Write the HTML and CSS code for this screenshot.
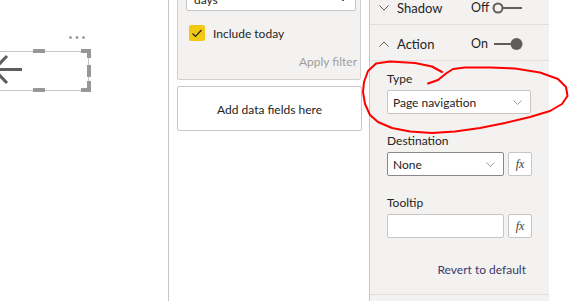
FILE: index.html
```html
<!DOCTYPE html>
<html lang="en">

<head>
  <meta charset="UTF-8">
  <title>Button action</title>
  <link rel="stylesheet" href="styles.css">
</head>

<body>
  <div class="app">
    <div class="canvas">
      <svg class="canvas-art" width="168" height="301" viewBox="0 0 168 301">
        <circle cx="70.5" cy="37.5" r="1.3" fill="#8a8886" />
        <circle cx="77" cy="37.5" r="1.3" fill="#8a8886" />
        <circle cx="83.5" cy="37.5" r="1.3" fill="#8a8886" />
        <rect x="-20.5" y="51.5" width="109" height="39" fill="none" stroke="#c8c6c4" />
        <line x1="-6" y1="69.5" x2="22" y2="69.5" stroke="#605e5c" stroke-width="3" />
        <polyline points="7,56 -6,69.5 7,83" fill="none" stroke="#605e5c" stroke-width="3" />
        <g fill="#999795">
          <rect x="33" y="49" width="12" height="4" />
          <rect x="33" y="88" width="12" height="4" />
          <rect x="87" y="65" width="4" height="12" />
          <rect x="81" y="49" width="10" height="4" />
          <rect x="87" y="49" width="4" height="9" />
          <rect x="81" y="88" width="10" height="4" />
          <rect x="87" y="81" width="4" height="11" />
        </g>
      </svg>
    </div>

    <div class="filter-pane">
      <div class="filter-card">
        <div class="select select-days">
          <span>days</span>
          <svg width="8" height="5" viewBox="0 0 8 5"><path d="M0.5 0.5 L4 4 L7.5 0.5" fill="none" stroke="#605e5c" /></svg>
        </div>
        <div class="check-row">
          <span class="checkbox">
            <svg width="16" height="16" viewBox="0 0 16 16"><path d="M3.5 8.5 L6.5 11.5 L12.5 5" fill="none" stroke="#252423" stroke-width="1.2" /></svg>
          </span>
          <span>Include today</span>
        </div>
        <div class="apply-filter">Apply filter</div>
      </div>
      <div class="drop-zone">Add data fields here</div>
    </div>

    <div class="format-pane">
      <div class="card-row card-row-top">
        <svg class="chevron" width="10" height="6" viewBox="0 0 10 6"><path d="M0.5 0.5 L5 5 L9.5 0.5" fill="none" stroke="#605e5c" /></svg>
        <span class="card-title">Shadow</span>
        <span class="card-state">Off</span>
        <svg class="toggle" width="34" height="14" viewBox="0 0 34 14"><circle cx="7" cy="7" r="4.5" fill="none" stroke="#605e5c" stroke-width="2" /><line x1="11.5" y1="7" x2="31" y2="7" stroke="#605e5c" stroke-width="2" /></svg>
      </div>
      <div class="card-row">
        <svg class="chevron" width="10" height="6" viewBox="0 0 10 6"><path d="M0.5 5.5 L5 1 L9.5 5.5" fill="none" stroke="#605e5c" /></svg>
        <span class="card-title">Action</span>
        <span class="card-state">On</span>
        <svg class="toggle" width="34" height="14" viewBox="0 0 34 14"><line x1="3" y1="7" x2="21" y2="7" stroke="#605e5c" stroke-width="2" /><circle cx="25.5" cy="7" r="6" fill="#605e5c" /></svg>
      </div>

      <div class="card-body">
        <div class="field-label">Type</div>
        <div class="select select-wide">
          <span>Page navigation</span>
          <svg width="9" height="5" viewBox="0 0 9 5"><path d="M0.5 0.5 L4.5 4.5 L8.5 0.5" fill="none" stroke="#a19f9d" /></svg>
        </div>

        <div class="field-label">Destination</div>
        <div class="field-line">
          <div class="select select-focus">
            <span>None</span>
            <svg width="9" height="5" viewBox="0 0 9 5"><path d="M0.5 0.5 L4.5 4.5 L8.5 0.5" fill="none" stroke="#a19f9d" /></svg>
          </div>
          <div class="fx-button">fx</div>
        </div>

        <div class="field-label">Tooltip</div>
        <div class="field-line">
          <div class="text-input"></div>
          <div class="fx-button">fx</div>
        </div>

        <div class="revert">Revert to default</div>
      </div>
    </div>

    <div class="scroll-strip"></div>
  </div>

  <!-- hand drawn red mark over the Type field -->
  <svg class="annotation" width="571" height="301" viewBox="0 0 571 301">
    <polyline
      points="442,72 432,66.5 415,63 390,61.5 376,63.5 368,71 364,82 363,92 365,104 370,115 378,122 392,128 410,131.5 432,133 455,131.5 480,128 505,123 530,117 550,111 562,104 567.5,96 566,87 558,79 540,72.5 515,68.5 490,67.5 465,67.5 453,69 446,73.5 438,80 428,83.5"
      fill="none" stroke="#ff0000" stroke-width="2" stroke-linejoin="round" stroke-linecap="round" />
  </svg>
</body>

</html>
```

FILE: styles.css
```css
body {
  margin: 0;
  padding: 0;
  font-family: 'Lato', 'Open Sans', sans-serif;
  font-size: 12px;
  color: #252423;
  background-color: #ffffff;
  overflow: hidden;
}

.app {
  display: flex;
  height: 301px;
  overflow: hidden;
}

.canvas {
  width: 168px;
  flex-shrink: 0;
}

.canvas-art {
  display: block;
}

/* filter pane */

.filter-pane {
  width: 192px;
  flex-shrink: 0;
  border-left: 1px solid #c8c6c4;
  border-right: 1px solid #c8c6c4;
  padding-left: 8px;
}

.filter-card {
  width: 184px;
  box-sizing: border-box;
  margin-top: -22px;
  padding: 8px 8px 9px 8px;
  background: #f3f2f1;
  border: 1px solid #d2d0ce;
  border-radius: 2px;
}

.select {
  display: flex;
  align-items: center;
  justify-content: space-between;
  height: 24px;
  box-sizing: border-box;
  padding: 0 8px 0 5px;
  background: #ffffff;
  border: 1px solid #c8c6c4;
  border-radius: 2px;
}

.select-days {
  width: 170px;
  padding-left: 7px;
}

.check-row {
  display: flex;
  align-items: center;
  margin-top: 14px;
  margin-left: 3px;
  height: 16px;
}

.checkbox {
  width: 16px;
  height: 16px;
  margin-right: 8px;
  background: #f2c811;
  border-radius: 2px;
}

.checkbox svg {
  display: block;
}

.apply-filter {
  margin-top: 13px;
  margin-right: -5px;
  text-align: right;
  color: #a19f9d;
  line-height: 16px;
}

.drop-zone {
  width: 185px;
  height: 45px;
  box-sizing: border-box;
  margin-top: 6px;
  padding-top: 1px;
  display: flex;
  align-items: center;
  justify-content: center;
  border: 1px solid #c8c6c4;
  border-radius: 2px;
}

/* format pane */

.format-pane {
  width: 179px;
  flex-shrink: 0;
  background: #f3f2f1;
}

.card-row {
  display: flex;
  align-items: center;
  height: 33px;
  padding-top: 2px;
  padding-left: 9px;
  border-bottom: 1px solid #e1dfdd;
}

.card-row-top {
  margin-top: -11px;
}

.chevron {
  margin-right: 8px;
}

.card-title {
  width: 74px;
  font-size: 13px;
}

.card-state {
  width: 20px;
  font-size: 12.5px;
}

.card-body {
  padding: 10px 17px 16px 17px;
  border-bottom: 1px solid #e1dfdd;
}

.field-label {
  line-height: 16px;
  margin-bottom: 3px;
}

.select-wide {
  width: 144px;
  margin-bottom: 19px;
}

.select-focus {
  width: 117px;
  border-color: #8a8886;
}

.field-line {
  display: flex;
  gap: 4px;
  margin-bottom: 19px;
}

.text-input {
  width: 117px;
  height: 24px;
  box-sizing: border-box;
  background: #ffffff;
  border: 1px solid #c8c6c4;
  border-radius: 2px;
}

.fx-button {
  width: 24px;
  height: 24px;
  box-sizing: border-box;
  display: flex;
  align-items: center;
  justify-content: center;
  background: #ffffff;
  border: 1px solid #c8c6c4;
  border-radius: 2px;
  font-family: 'Liberation Serif', serif;
  font-style: italic;
  font-size: 12px;
  color: #3b3a39;
}

.revert {
  margin-top: 24px;
  padding-right: 6px;
  text-align: right;
  line-height: 16px;
  color: #3b3a6b;
}

.scroll-strip {
  flex: 1;
  background: #ffffff;
}

.annotation {
  position: absolute;
  left: 0;
  top: 0;
  pointer-events: none;
}
```
